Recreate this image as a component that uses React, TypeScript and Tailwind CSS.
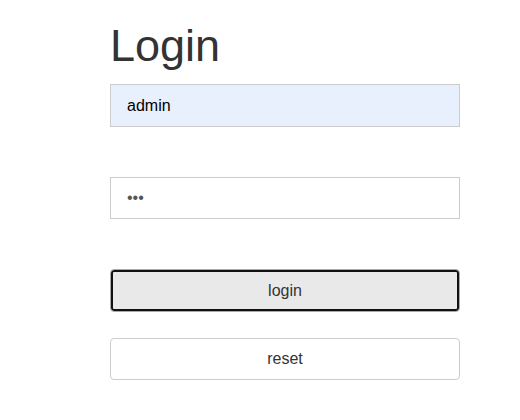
export default function App() {
  return (
    <main className="min-h-screen bg-white font-['Liberation_Sans',Arial,sans-serif] text-[#333]">
      <form
        className="ml-[110px] flex w-[350px] flex-col pt-[21px]"
        onSubmit={(e) => e.preventDefault()}
      >
        <h1 className="text-[45px] leading-[50px] font-normal text-[#333]">Login</h1>
        <input
          className="mt-[13px] h-[43px] w-full border border-[#ccc] bg-[#e8f0fe] px-4 text-base text-black outline-none"
          type="text"
          defaultValue="admin"
        />
        <input
          className="mt-[50px] h-[42px] w-full border border-[#ccc] bg-white px-4 text-base text-[#555] outline-none"
          type="password"
          defaultValue="123"
        />
        <button
          className="mt-[50px] h-[43px] w-full rounded-[4px] border border-[#aaa] bg-[#e9e9e9] text-base text-[#333] shadow-[inset_0_0_0_2px_#111]"
          type="submit"
        >
          login
        </button>
        <button
          className="mt-[26px] h-[42px] w-full rounded-[4px] border border-[#ccc] bg-white text-base text-[#333]"
          type="reset"
        >
          reset
        </button>
      </form>
    </main>
  );
}
